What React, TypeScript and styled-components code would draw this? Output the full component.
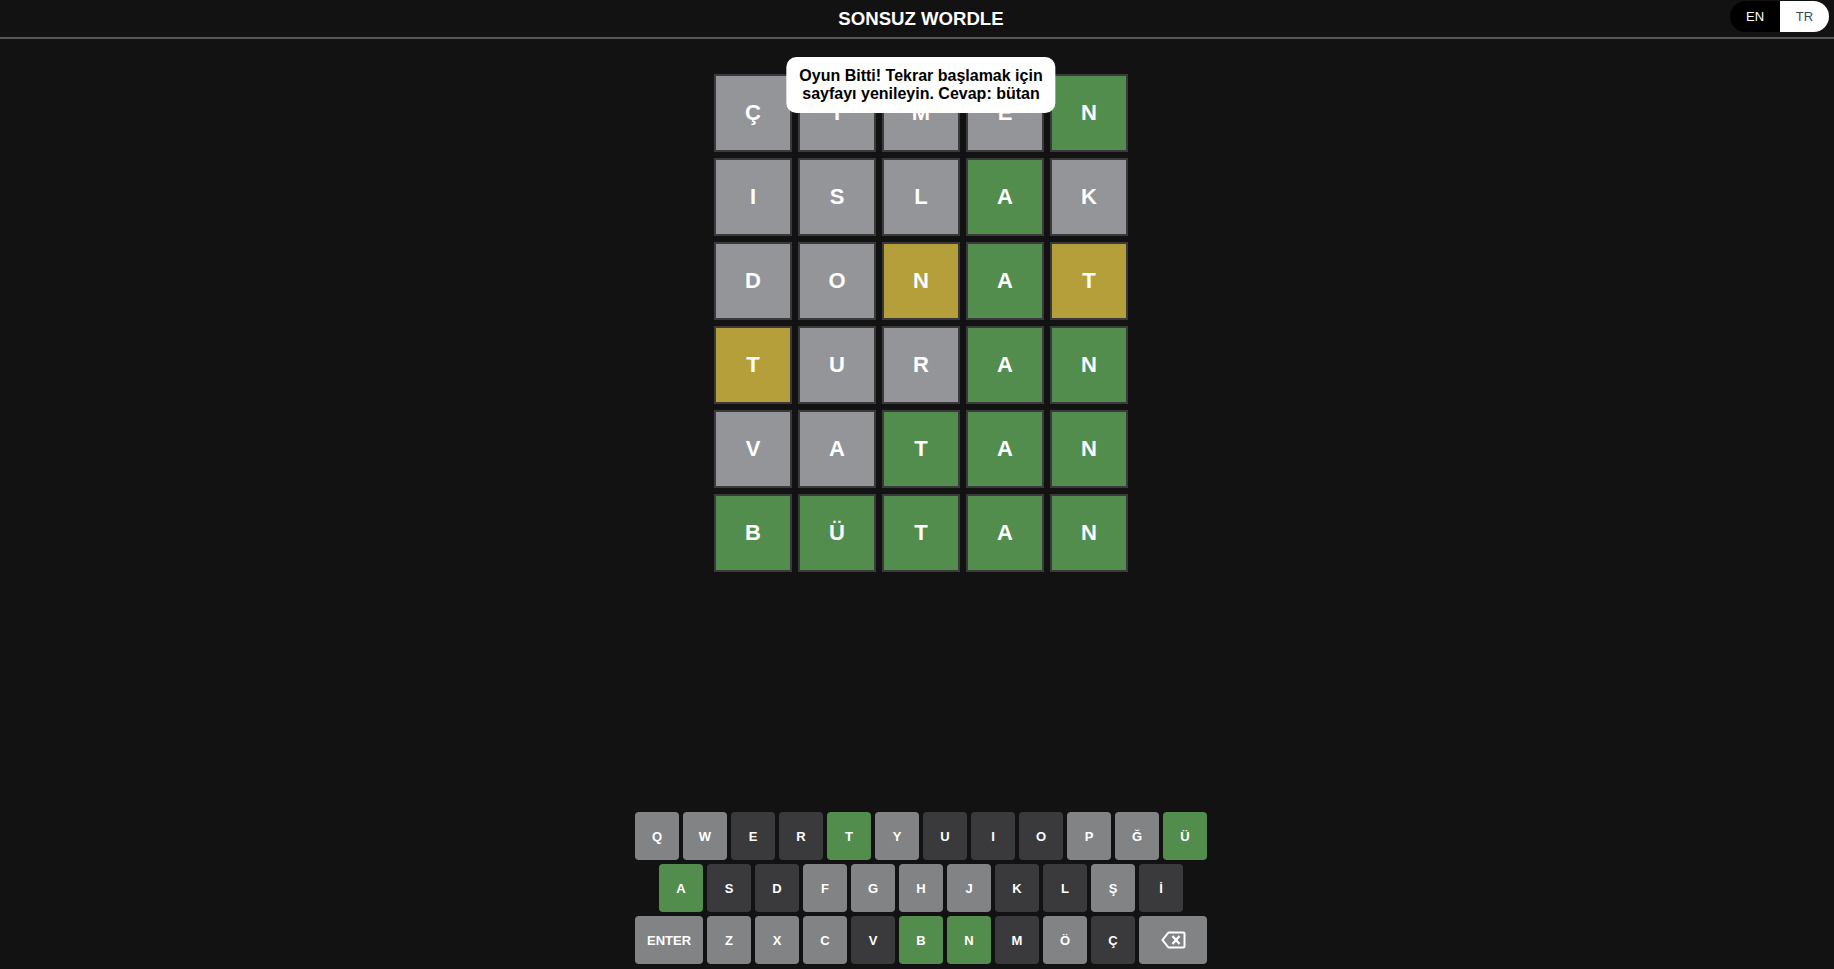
import React from "react";
import styled, { createGlobalStyle } from "styled-components";

const GlobalStyle = createGlobalStyle`
  html, body {
    margin: 0;
    padding: 0;
    background: #121212;
    font-family: "Liberation Sans", Arial, Helvetica, sans-serif;
    overflow: hidden;
  }
  * { box-sizing: border-box; }
`;

type Status = "absent" | "present" | "correct";
type KeyState = "unused" | "used" | "correct";

const tileColors: Record<Status, string> = {
  absent: "#939598",
  present: "#b59f3b",
  correct: "#538d4e",
};

const keyColors: Record<KeyState, string> = {
  unused: "#818384",
  used: "#3a3a3c",
  correct: "#538d4e",
};

const Page = styled.div`
  height: 100vh;
  display: flex;
  flex-direction: column;
  color: #fff;
`;

const Header = styled.header`
  height: 39px;
  border-bottom: 2px solid #565656;
  display: grid;
  grid-template-columns: 1fr auto 1fr;
  align-items: center;
  padding: 0 5px 0 13px;
`;

const Title = styled.h1`
  grid-column: 2;
  margin: 0;
  font-size: 18.6px;
  font-weight: 700;
  color: #fff;
  letter-spacing: 0;
  line-height: 1;
  padding-top: 2px;
`;

const LangToggle = styled.div`
  grid-column: 3;
  justify-self: end;
  align-self: start;
  margin-top: 1px;
  display: flex;
  height: 31px;
  border-radius: 16px;
  overflow: hidden;
`;

const LangButton = styled.button<{ $active: boolean }>`
  width: ${(p) => (p.$active ? "49px" : "50px")};
  height: 100%;
  border: none;
  padding: 0;
  font-family: inherit;
  font-size: 13px;
  background: ${(p) => (p.$active ? "#ffffff" : "#000000")};
  color: ${(p) => (p.$active ? "#3a4a55" : "#ffffff")};
  cursor: pointer;
`;

const Main = styled.main`
  flex: 1;
  display: flex;
  flex-direction: column;
  align-items: center;
  padding-left: 8px;
`;

const BoardWrap = styled.div`
  position: relative;
  margin-top: 35px;
`;

const Board = styled.div`
  display: grid;
  grid-template-columns: repeat(5, 78px);
  grid-auto-rows: 78px;
  gap: 6px;
`;

const Tile = styled.div<{ $status: Status }>`
  background: ${(p) => tileColors[p.$status]};
  border: 2px solid #3a3a3c;
  display: flex;
  align-items: center;
  justify-content: center;
  font-size: 22px;
  font-weight: 700;
  color: #fff;
`;

const Toast = styled.div`
  position: absolute;
  top: -17px;
  left: 50%;
  transform: translateX(-50%);
  background: #fff;
  color: #000;
  border-radius: 10px;
  padding: 10px 13px;
  font-size: 16px;
  font-weight: 700;
  line-height: 18px;
  text-align: center;
  white-space: nowrap;
  z-index: 2;
`;

const Keyboard = styled.div`
  margin-top: auto;
  padding-bottom: 5px;
  display: flex;
  flex-direction: column;
  align-items: center;
  gap: 4px;
`;

const KeyRow = styled.div`
  display: flex;
  gap: 4px;
`;

const Key = styled.button<{ $state: KeyState; $wide?: boolean }>`
  width: ${(p) => (p.$wide ? "68px" : "44px")};
  height: 48px;
  border: none;
  border-radius: 4px;
  background: ${(p) => keyColors[p.$state]};
  color: #fff;
  font-family: inherit;
  font-size: 13px;
  font-weight: 700;
  display: flex;
  align-items: center;
  justify-content: center;
  padding: 0;
  cursor: pointer;
`;

const BackspaceIcon = () => (
  <svg width="25" height="18" viewBox="0 0 25 18" fill="none">
    <path
      d="M7.5 1.5 H22.5 A1 1 0 0 1 23.5 2.5 V15.5 A1 1 0 0 1 22.5 16.5 H7.5 L1.5 9 Z"
      stroke="#fff"
      strokeWidth="2"
      strokeLinejoin="miter"
    />
    <path d="M11.5 5 L18.5 13 M18.5 5 L11.5 13" stroke="#fff" strokeWidth="2.2" />
  </svg>
);

const guesses: { letters: string[]; status: Status[] }[] = [
  { letters: ["Ç", "İ", "M", "E", "N"], status: ["absent", "absent", "absent", "absent", "correct"] },
  { letters: ["I", "S", "L", "A", "K"], status: ["absent", "absent", "absent", "correct", "absent"] },
  { letters: ["D", "O", "N", "A", "T"], status: ["absent", "absent", "present", "correct", "present"] },
  { letters: ["T", "U", "R", "A", "N"], status: ["present", "absent", "absent", "correct", "correct"] },
  { letters: ["V", "A", "T", "A", "N"], status: ["absent", "absent", "correct", "correct", "correct"] },
  { letters: ["B", "Ü", "T", "A", "N"], status: ["correct", "correct", "correct", "correct", "correct"] },
];

const U: KeyState = "unused";
const D: KeyState = "used";
const G: KeyState = "correct";

const rows: { k: string; s: KeyState }[][] = [
  [
    { k: "Q", s: U }, { k: "W", s: U }, { k: "E", s: D }, { k: "R", s: D },
    { k: "T", s: G }, { k: "Y", s: U }, { k: "U", s: D }, { k: "I", s: D },
    { k: "O", s: D }, { k: "P", s: U }, { k: "Ğ", s: U }, { k: "Ü", s: G },
  ],
  [
    { k: "A", s: G }, { k: "S", s: D }, { k: "D", s: D }, { k: "F", s: U },
    { k: "G", s: U }, { k: "H", s: U }, { k: "J", s: U }, { k: "K", s: D },
    { k: "L", s: D }, { k: "Ş", s: U }, { k: "İ", s: D },
  ],
  [
    { k: "ENTER", s: U }, { k: "Z", s: U }, { k: "X", s: U }, { k: "C", s: U },
    { k: "V", s: D }, { k: "B", s: G }, { k: "N", s: G }, { k: "M", s: D },
    { k: "Ö", s: U }, { k: "Ç", s: D }, { k: "BACK", s: U },
  ],
];

export default function App() {
  return (
    <>
      <GlobalStyle />
      <Page>
        <Header>
          <Title>SONSUZ WORDLE</Title>
          <LangToggle>
            <LangButton $active={false}>EN</LangButton>
            <LangButton $active={true}>TR</LangButton>
          </LangToggle>
        </Header>
        <Main>
          <BoardWrap>
            <Toast>
              Oyun Bitti! Tekrar başlamak için
              <br />
              sayfayı yenileyin. Cevap: bütan
            </Toast>
            <Board>
              {guesses.map((g, r) =>
                g.letters.map((l, c) => (
                  <Tile key={`${r}-${c}`} $status={g.status[c]}>
                    {l}
                  </Tile>
                ))
              )}
            </Board>
          </BoardWrap>
          <Keyboard>
            {rows.map((row, i) => (
              <KeyRow key={i}>
                {row.map((key) => (
                  <Key key={key.k} $state={key.s} $wide={key.k === "ENTER" || key.k === "BACK"}>
                    {key.k === "BACK" ? <BackspaceIcon /> : key.k}
                  </Key>
                ))}
              </KeyRow>
            ))}
          </Keyboard>
        </Main>
      </Page>
    </>
  );
}
